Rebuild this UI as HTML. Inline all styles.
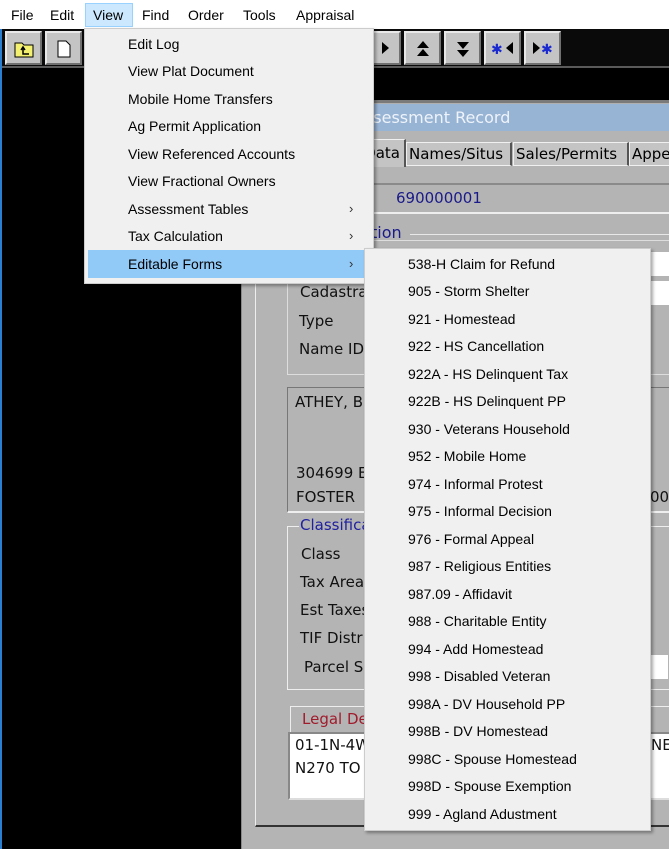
<!DOCTYPE html>
<html><head><style>
*{margin:0;padding:0;box-sizing:border-box}
body{width:669px;height:849px;overflow:hidden;background:#000;position:relative;font-family:"Liberation Sans",sans-serif}
.a{position:absolute;white-space:nowrap}
.mb{font-size:14px;color:#000;top:7px}
.btn{position:absolute;top:31px;height:34px;background:#c4c4c4;border-top:2px solid #e8e8e8;border-left:2px solid #e8e8e8;border-right:2px solid #707070;border-bottom:2px solid #707070;text-align:center;font-size:16px;line-height:30px}
.btn svg{display:block;margin:7px auto 0}
.w{font-family:"DejaVu Sans",sans-serif;font-size:14px;color:#111}
.mi{font-size:14px;color:#000;position:absolute;left:128px}
.si{font-size:14px;color:#000;position:absolute;left:408px}
.arr{position:absolute;left:349px;font-size:13px;color:#333}
.tab{position:absolute;top:142px;height:24px;background:#c4c4c4;border:1px solid #f0f0f0;border-right:2px solid #555;font-family:"DejaVu Sans",sans-serif;font-size:15px;line-height:22px;padding-left:2px;color:#000}
</style></head><body>
<div class="a" style="left:0;top:0;width:669px;height:29px;background:#fff"></div>
<div class="a" style="left:85px;top:3px;width:48px;height:24px;background:#cce8ff;border:1px solid #99d1ff"></div>
<div class="a mb" style="left:11px">File</div>
<div class="a mb" style="left:50px">Edit</div>
<div class="a mb" style="left:93px">View</div>
<div class="a mb" style="left:142px">Find</div>
<div class="a mb" style="left:188px">Order</div>
<div class="a mb" style="left:243px">Tools</div>
<div class="a mb" style="left:296px">Appraisal</div>
<div class="a" style="left:0;top:29px;width:2px;height:820px;background:#2b7fd0"></div>
<div class="a" style="left:2px;top:29px;width:667px;height:39px;background:#0a0a0a"></div>
<div class="a" style="left:2px;top:66px;width:667px;height:2px;background:#5a5a5a"></div>
<div class="btn" style="left:5px;width:37px"><svg width="20" height="18"><path d="M1 3h7l2 2h9v12H1z" fill="#f4f070" stroke="#000"/><path d="M9 8v6h6M7 10l2-3 2 3" fill="none" stroke="#000" stroke-width="1.5"/></svg></div>
<div class="btn" style="left:45px;width:37px"><svg width="14" height="18"><path d="M1 1h8l4 4v12H1z" fill="#fff" stroke="#000"/></svg></div>
<div class="btn" style="left:368px;width:33px"><svg width="10" height="16"><path d="M2 2l7 6-7 6z" fill="#000"/></svg></div>
<div class="btn" style="left:404px;width:37px"><svg width="14" height="18"><path d="M7 1l6 7H1zM7 9l6 7H1z" fill="#000"/></svg></div>
<div class="btn" style="left:444px;width:37px"><svg width="14" height="18"><path d="M1 2h12L7 9zM1 10h12l-6 7z" fill="#000"/></svg></div>
<div class="btn" style="left:484px;width:37px"><svg width="24" height="16"><text x="0" y="14" font-size="14" fill="#1a2ad0" font-family="DejaVu Sans">✱</text><path d="M22 2l-7 6 7 6z" fill="#000"/></svg></div>
<div class="btn" style="left:524px;width:37px"><svg width="24" height="16"><path d="M2 2l7 6-7 6z" fill="#000"/><text x="10" y="14" font-size="14" fill="#1a2ad0" font-family="DejaVu Sans">✱</text></svg></div>
<div class="a" style="left:241px;top:100px;width:428px;height:749px;background:#b0b0b0;border-top:3px solid #7a7a7a;border-left:1px solid #888"></div>
<div class="a" style="left:242px;top:104px;width:427px;height:27px;background:#98b4d4"></div>
<div class="a" style="left:354px;top:108px;font-family:'DejaVu Sans',sans-serif;font-size:16px;color:#eef3fa">Assessment Record</div>
<div class="a" style="left:242px;top:131px;width:427px;height:718px;background:#b4b4b4"></div>
<div class="a" style="left:255px;top:165px;width:414px;height:662px;border-left:1px solid #eee;border-bottom:2px solid #333"></div>
<div class="tab" style="left:330px;top:139px;height:28px;width:76px;border-bottom:none;text-align:right;padding-right:4px;line-height:26px">Data</div>
<div class="tab" style="left:406px;width:106px">Names/Situs</div>
<div class="tab" style="left:513px;width:116px">Sales/Permits</div>
<div class="tab" style="left:629px;width:45px">Appe</div>
<div class="a" style="left:255px;top:183px;width:414px;height:2px;background:#8a8a8a"></div>
<div class="a w" style="left:396px;top:189px;color:#1a1a8a;font-size:15px">690000001</div>
<div class="a" style="left:255px;top:212px;width:414px;height:2px;background:#eee"></div>
<div class="a w" style="left:334px;top:223px;color:#1a1a8a;font-size:16px">Location</div>
<div class="a" style="left:410px;top:234px;width:259px;height:1px;background:#e8e8e8"></div>
<div class="a" style="left:287px;top:240px;width:390px;height:135px;border:1px solid #ddd;border-right:none"></div>
<div class="a" style="left:640px;top:252px;width:40px;height:24px;background:#fff"></div>
<div class="a" style="left:640px;top:281px;width:40px;height:24px;background:#fff"></div>
<div class="a w" style="left:300px;top:283px;font-size:15px">Cadastral</div>
<div class="a w" style="left:299px;top:312px;font-size:15px">Type</div>
<div class="a w" style="left:299px;top:340px;font-size:15px">Name ID</div>
<div class="a" style="left:287px;top:387px;width:390px;height:126px;border-top:1px solid #777;border-left:1px solid #777;border-bottom:2px solid #eee"></div>
<div class="a w" style="left:295px;top:393px;font-size:15px">ATHEY, B</div>
<div class="a w" style="left:296px;top:464px;font-size:15px">304699 E</div>
<div class="a w" style="left:296px;top:488px;font-size:15px">FOSTER</div>
<div class="a w" style="left:650px;top:488px;font-size:15px">00</div>
<div class="a" style="left:287px;top:526px;width:390px;height:164px;border:1px solid #eee;border-right:none"></div>
<div class="a w" style="left:299px;top:516px;color:#2020a0;background:#b4b4b4;padding:0 1px;font-size:15px">Classification</div>
<div class="a w" style="left:301px;top:545px;font-size:15px">Class</div>
<div class="a w" style="left:300px;top:573px;font-size:15px">Tax Area</div>
<div class="a w" style="left:300px;top:601px;font-size:15px">Est Taxes</div>
<div class="a w" style="left:300px;top:629px;font-size:15px">TIF District</div>
<div class="a w" style="left:304px;top:658px;font-size:15px">Parcel S</div>
<div class="a" style="left:640px;top:655px;width:28px;height:24px;background:#fff"></div>
<div class="a" style="left:290px;top:706px;width:400px;height:26px;border-top:1px solid #eee;border-left:1px solid #eee"></div>
<div class="a w" style="left:302px;top:710px;color:#a01c2c;font-size:15px">Legal Description</div>
<div class="a" style="left:288px;top:732px;width:390px;height:68px;background:#fff;border:2px solid #ddd;border-top-color:#888;border-left-color:#888"></div>
<div class="a w" style="left:295px;top:736px;font-size:15px">01-1N-4W</div>
<div class="a w" style="left:295px;top:759px;font-size:15px">N270 TO</div>
<div class="a w" style="left:651px;top:736px;font-size:15px">NE</div>
<div class="a" style="left:84px;top:28px;width:290px;height:256px;background:#f0f0f0;border:1px solid #ccc;box-shadow:2px 2px 3px rgba(0,0,0,.35)"></div>
<div class="a" style="left:88px;top:250px;width:280px;height:28px;background:#91c9f7"></div>
<div class="mi" style="top:36px">Edit Log</div>
<div class="mi" style="top:63px">View Plat Document</div>
<div class="mi" style="top:91px">Mobile Home Transfers</div>
<div class="mi" style="top:118px">Ag Permit Application</div>
<div class="mi" style="top:146px">View Referenced Accounts</div>
<div class="mi" style="top:173px">View Fractional Owners</div>
<div class="mi" style="top:201px">Assessment Tables</div>
<div class="mi" style="top:228px">Tax Calculation</div>
<div class="mi" style="top:256px">Editable Forms</div>
<div class="arr" style="top:201px">›</div>
<div class="arr" style="top:228px">›</div>
<div class="arr" style="top:256px">›</div>
<div class="a" style="left:364px;top:248px;width:287px;height:583px;background:#f0f0f0;border:1px solid #ccc;box-shadow:2px 2px 3px rgba(0,0,0,.35)"></div>
<div class="si" style="top:256px">538-H Claim for Refund</div>
<div class="si" style="top:283px">905 - Storm Shelter</div>
<div class="si" style="top:311px">921 - Homestead</div>
<div class="si" style="top:338px">922 - HS Cancellation</div>
<div class="si" style="top:366px">922A - HS Delinquent Tax</div>
<div class="si" style="top:393px">922B - HS Delinquent PP</div>
<div class="si" style="top:421px">930 - Veterans Household</div>
<div class="si" style="top:448px">952 - Mobile Home</div>
<div class="si" style="top:476px">974 - Informal Protest</div>
<div class="si" style="top:503px">975 - Informal Decision</div>
<div class="si" style="top:531px">976 - Formal Appeal</div>
<div class="si" style="top:558px">987 - Religious Entities</div>
<div class="si" style="top:586px">987.09 - Affidavit</div>
<div class="si" style="top:613px">988 - Charitable Entity</div>
<div class="si" style="top:641px">994 - Add Homestead</div>
<div class="si" style="top:668px">998 - Disabled Veteran</div>
<div class="si" style="top:696px">998A - DV Household PP</div>
<div class="si" style="top:723px">998B - DV Homestead</div>
<div class="si" style="top:751px">998C - Spouse Homestead</div>
<div class="si" style="top:778px">998D - Spouse Exemption</div>
<div class="si" style="top:806px">999 - Agland Adustment</div>
</body></html>
